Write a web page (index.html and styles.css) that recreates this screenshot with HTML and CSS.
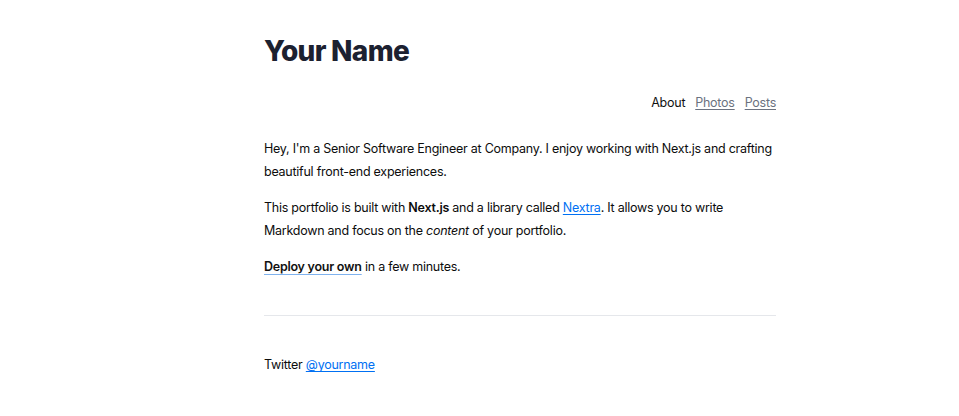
FILE: index.html
```html
<!DOCTYPE html>
<html lang="en">
<head>
<meta charset="utf-8">
<title>Your Name</title>
<link rel="stylesheet" href="styles.css">
</head>
<body>
<main class="page">
  <header class="header">
    <h1 class="title">Your Name</h1>
    <nav class="nav">
      <span class="nav-current">About</span>
      <a class="nav-link" href="#">Photos</a>
      <a class="nav-link" href="#">Posts</a>
    </nav>
  </header>
  <article class="content">
    <p>Hey, I'm a Senior Software Engineer at Company. I enjoy working with Next.js and crafting beautiful front-end experiences.</p>
    <p>This portfolio is built with <strong>Next.js</strong> and a library called <a class="link" href="#">Nextra</a>. It allows you to write Markdown and focus on the <em>content</em> of your portfolio.</p>
    <p><a class="deploy" href="#">Deploy your own</a> in a few minutes.</p>
  </article>
  <hr class="rule">
  <footer class="footer">
    <p>Twitter <a class="link" href="#">@yourname</a></p>
  </footer>
</main>
</body>
</html>
```
FILE: styles.css
```css
html, body {
  margin: 0;
  padding: 0;
  background: #ffffff;
}
body {
  font-family: Inter, "Noto Sans", sans-serif;
  color: #0d0d0d;
  font-size: 12.5px;
  line-height: 22.4px;
  letter-spacing: -0.25px;
}
.page {
  width: 512px;
  margin-left: 264px;
  padding-top: 31px;
}
.title {
  margin: 0;
  font-size: 28px;
  line-height: 40px;
  font-weight: 800;
  letter-spacing: -0.025em;
  color: #1c2130;
}
.nav {
  display: flex;
  justify-content: flex-end;
  gap: 10px;
  margin-top: 21px;
}
.nav-current {
  color: #111111;
}
.nav-link {
  color: #6b7280;
  text-decoration: underline;
  text-underline-offset: 2px;
}
.content {
  margin-top: 24px;
}
.content p {
  margin: 14px 0;
}
.content p:first-child {
  margin-top: 0;
}
.content strong {
  font-weight: 600;
}
.link {
  color: #0070f3;
  text-decoration: underline;
  text-underline-offset: 2px;
}
.deploy {
  color: #111111;
  font-weight: 600;
  text-decoration: underline;
  text-decoration-color: #7fb2ee;
  text-underline-offset: 3px;
}
.rule {
  border: 0;
  border-top: 1px solid #e5e7eb;
  margin: 37px 0 0;
}
.footer p {
  margin: 38px 0 0;
}
```
